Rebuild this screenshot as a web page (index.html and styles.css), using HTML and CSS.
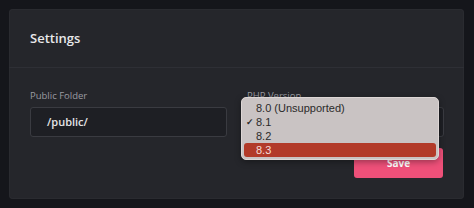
FILE: index.html
```html
<!DOCTYPE html>
<html lang="en">
<head>
  <meta charset="UTF-8" />
  <title>Settings</title>
  <link rel="stylesheet" href="styles.css">
</head>
<body>
  <div class="card">
    <div class="card-header">Settings</div>
    <div class="card-body">
      <div class="field">
        <label class="label">Public Folder</label>
        <div class="input">/public/</div>
      </div>
      <div class="field php">
        <label class="label">PHP Version</label>
        <div class="input select"></div>
        <div class="actions">
          <button class="save">Save</button>
        </div>
        <ul class="menu">
          <li>8.0 (Unsupported)</li>
          <li class="checked"><span class="check">&#10003;</span>8.1</li>
          <li>8.2</li>
          <li class="active">8.3</li>
        </ul>
      </div>
    </div>
  </div>
</body>
</html>
```

FILE: styles.css
```css
body {
  margin: 0;
  padding: 9px 10px 9px 9px;
  background: #15161b;
  font-family: "Open Sans", sans-serif;
}
.card {
  height: 190px;
  background: #25262b;
  border-radius: 4px;
  box-shadow: inset 0 0 0 1px #2a2b30;
}
.card-header {
  height: 58px;
  display: flex;
  align-items: center;
  padding-left: 21px;
  border-bottom: 1px solid #2e2f35;
  color: #e8e8ea;
  font-size: 13px;
  font-weight: 600;
}
.card-body {
  display: grid;
  grid-template-columns: 197px 197px;
  gap: 20px;
  padding: 21px 21px 0;
}
.field {
  position: relative;
}
.label {
  display: block;
  height: 14px;
  line-height: 14px;
  margin-bottom: 4px;
  color: #9a9ba1;
  font-size: 9.5px;
}
.input {
  box-sizing: border-box;
  height: 30px;
  line-height: 28px;
  padding-left: 16px;
  background: #1e1f24;
  border: 1px solid #3a3b41;
  border-radius: 3px;
  color: #e4e4e6;
  font-size: 11px;
  font-weight: 600;
}
.actions {
  display: flex;
  justify-content: flex-end;
  margin-top: 11px;
}
.save {
  width: 89px;
  height: 30px;
  border: none;
  border-radius: 3px;
  background: #ee5079;
  color: #fff;
  font-family: "Open Sans", sans-serif;
  font-size: 10px;
  font-weight: 700;
  margin-right: 1px;
}
.menu {
  position: absolute;
  left: -6px;
  top: 8px;
  width: 198px;
  box-sizing: border-box;
  margin: 0;
  padding: 3px 2px 2px;
  list-style: none;
  background: #c9c3c3;
  border: 1px solid #ddd6d5;
  border-radius: 5px;
  box-shadow: 0 2px 6px rgba(0, 0, 0, 0.35);
  font-family: "Liberation Sans", sans-serif;
  font-size: 11px;
  color: #2b2a2a;
}
.menu li {
  position: relative;
  height: 14px;
  line-height: 14px;
  padding-left: 12px;
  border-radius: 3px;
}
.check {
  position: absolute;
  left: 2px;
  font-size: 9px;
  font-weight: 700;
}
.menu .active {
  background: #b23a29;
  color: #f6ddd7;
}
```
